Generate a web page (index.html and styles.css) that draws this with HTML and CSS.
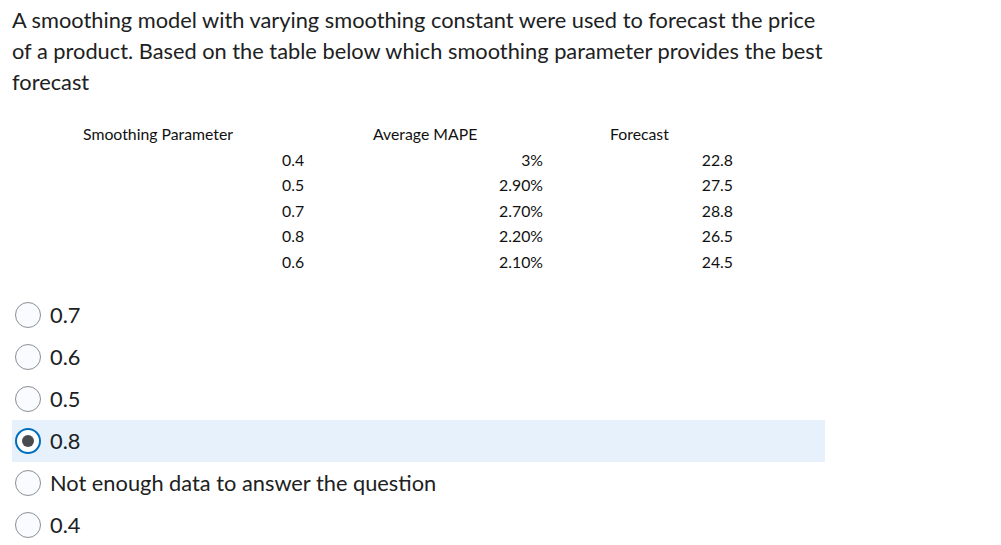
FILE: index.html
```html
<!DOCTYPE html>
<html>
<head>
<meta charset="utf-8">
<link rel="stylesheet" href="styles.css">
</head>
<body>
<div class="page">
  <p class="question">A smoothing model with varying smoothing constant were used to forecast the price of a product. Based on the table below which smoothing parameter provides the best forecast</p>
  <div class="table">
    <div class="row head">
      <div class="h1">Smoothing Parameter</div>
      <div class="h2">Average MAPE</div>
      <div class="h3">Forecast</div>
    </div>
    <div class="row"><div></div><div class="c1">0.4</div><div class="c2">3%</div><div class="c3">22.8</div></div>
    <div class="row"><div></div><div class="c1">0.5</div><div class="c2">2.90%</div><div class="c3">27.5</div></div>
    <div class="row"><div></div><div class="c1">0.7</div><div class="c2">2.70%</div><div class="c3">28.8</div></div>
    <div class="row"><div></div><div class="c1">0.8</div><div class="c2">2.20%</div><div class="c3">26.5</div></div>
    <div class="row"><div></div><div class="c1">0.6</div><div class="c2">2.10%</div><div class="c3">24.5</div></div>
  </div>
  <div class="options">
    <label class="option"><span class="radio"></span><span class="label">0.7</span></label>
    <label class="option"><span class="radio"></span><span class="label">0.6</span></label>
    <label class="option"><span class="radio"></span><span class="label">0.5</span></label>
    <label class="option selected"><span class="radio checked"></span><span class="label">0.8</span></label>
    <label class="option"><span class="radio"></span><span class="label">Not enough data to answer the question</span></label>
    <label class="option"><span class="radio"></span><span class="label">0.4</span></label>
  </div>
</div>
</body>
</html>
```
FILE: styles.css
```css
html, body {
  margin: 0;
  padding: 0;
  background: #ffffff;
}
.page {
  padding: 4px 0 0 12px;
  width: 813px;
  font-family: Lato, "Noto Sans", sans-serif;
  color: #202122;
}
.question {
  margin: 0;
  font-size: 21.8px;
  line-height: 31px;
  width: 820px;
}
.table {
  margin-top: 24px;
  width: 726px;
  font-family: Lato, "Noto Sans", sans-serif;
  font-size: 15.8px;
  color: #111;
}
.row {
  display: grid;
  grid-template-columns: 264px 130px 142px 190px;
  height: 25.5px;
  line-height: 25.5px;
}
.row .c1 { padding-left: 6px; }
.row .c2 { text-align: right; padding-right: 5px; }
.row .c3 { text-align: right; padding-right: 5px; }
.row.head .h1 { padding-left: 71px; }
.row.head .h2 { grid-column: 2 / 4; padding-left: 97px; }
.row.head .h3 { padding-left: 62px; }
.options {
  margin-top: 20px;
  display: flex;
  flex-direction: column;
}
.option {
  display: flex;
  align-items: center;
  gap: 9px;
  height: 42px;
  padding-left: 3px;
  font-size: 21.8px;
}
.option.selected {
  background: #e6f1fb;
}
.radio {
  box-sizing: border-box;
  width: 26px;
  height: 26px;
  border-radius: 50%;
  border: 1px solid #8a8f93;
  background: #f9fbff;
  flex: none;
  display: flex;
  align-items: center;
  justify-content: center;
}
.radio.checked {
  border: 2px solid #006fbf;
  background: #ffffff;
}
.radio.checked::after {
  content: "";
  width: 12px;
  height: 12px;
  border-radius: 50%;
  background: #494c4e;
}
.label {
  line-height: 24px;
}
```
